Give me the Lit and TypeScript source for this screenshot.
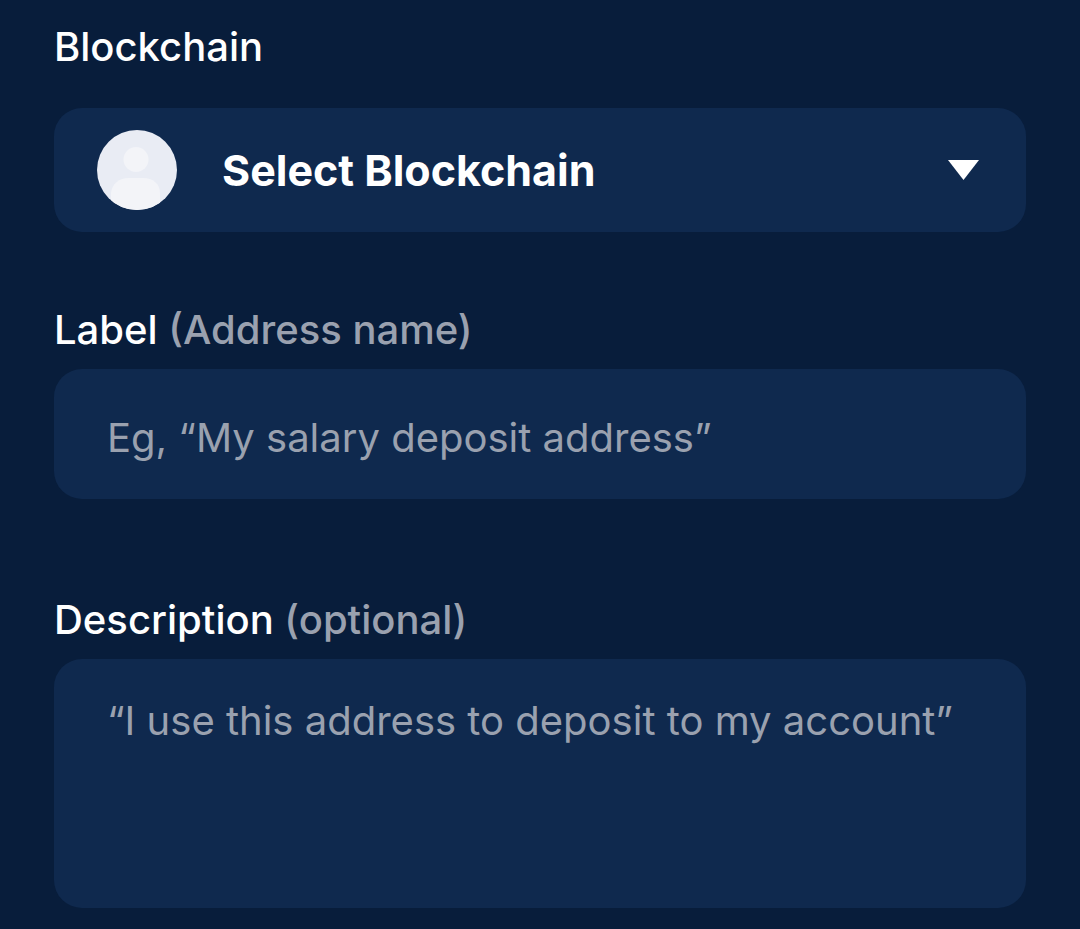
import { LitElement, html, css } from "lit";
import { customElement } from "lit/decorators.js";

@customElement("app-root")
export class AppRoot extends LitElement {
  static styles = css`
    :host {
      display: block;
      box-sizing: border-box;
      min-height: 100vh;
      background: #081d3b;
      color: #fff;
      font-family: Inter, "Liberation Sans", sans-serif;
      font-size: 40px;
      line-height: 52px;
    }
    .form {
      display: flex;
      flex-direction: column;
      padding: 21px 54px;
    }
    .field {
      display: flex;
      flex-direction: column;
      gap: 13px;
    }
    .field.chain {
      gap: 35px;
      margin-bottom: 72px;
    }
    .field.name {
      margin-bottom: 95px;
    }
    .caption {
      font-weight: 500;
    }
    .hint {
      color: #9aa1af;
    }
    .control {
      box-sizing: border-box;
      width: 100%;
      margin: 0;
      border: 0;
      border-radius: 28px;
      outline: 0;
      background: #0f294e;
      color: #fff;
      font: inherit;
    }
    .control::placeholder {
      color: #9aa1af;
      opacity: 1;
    }
    .picker {
      display: grid;
      grid-template-columns: 80px 1fr 32px;
      align-items: center;
      border-radius: 28px;
      background: #0f294e;
    }
    .avatar {
      grid-area: 1 / 1;
      display: block;
      width: 80px;
      height: 80px;
      margin-left: 43px;
      pointer-events: none;
    }
    .caret {
      grid-area: 1 / 3;
      justify-self: end;
      display: block;
      width: 32px;
      height: 22px;
      margin-right: 46px;
      pointer-events: none;
    }
    .select {
      grid-area: 1 / 1 / 2 / 4;
      appearance: none;
      height: 124px;
      padding: 0 90px 0 168px;
      background: transparent;
      font-size: 43px;
      font-weight: 700;
      cursor: pointer;
    }
    .select option {
      background: #0f294e;
    }
    .input {
      height: 130px;
      padding: 6px 53px 0;
    }
    .area {
      display: block;
      height: 249px;
      padding: 36px 53px;
      resize: none;
      overflow: hidden;
    }
  `;

  render() {
    return html`
      <form class="form">
        <div class="field chain">
          <label class="caption" for="chain">Blockchain</label>
          <div class="picker">
            <select class="control select" id="chain">
              <option>Select Blockchain</option>
            </select>
            <svg class="avatar" viewBox="0 0 80 80" aria-hidden="true">
              <defs>
                <clipPath id="disc"><circle cx="40" cy="40" r="40" /></clipPath>
              </defs>
              <circle cx="40" cy="40" r="40" fill="#e9ecf4" />
              <g fill="#f3f4f8" clip-path="url(#disc)">
                <circle cx="39" cy="29.500" r="12.500" />
                <path d="M14 80V63C15 54 22 48 32 48H46C56 48 63 54 63 63V80Z" />
              </g>
            </svg>
            <svg class="caret" viewBox="0 0 32 22" aria-hidden="true">
              <path d="M0 1H31L15.500 21Z" fill="#fff" />
            </svg>
          </div>
        </div>
        <div class="field name">
          <label class="caption" for="name">Label <span class="hint">(Address name)</span></label>
          <input class="control input" id="name" type="text" placeholder="Eg, “My salary deposit address”" />
        </div>
        <div class="field">
          <label class="caption" for="description">Description <span class="hint">(optional)</span></label>
          <textarea
            class="control area"
            id="description"
            placeholder="“I use this address to deposit to my account”"
          ></textarea>
        </div>
      </form>
    `;
  }
}
